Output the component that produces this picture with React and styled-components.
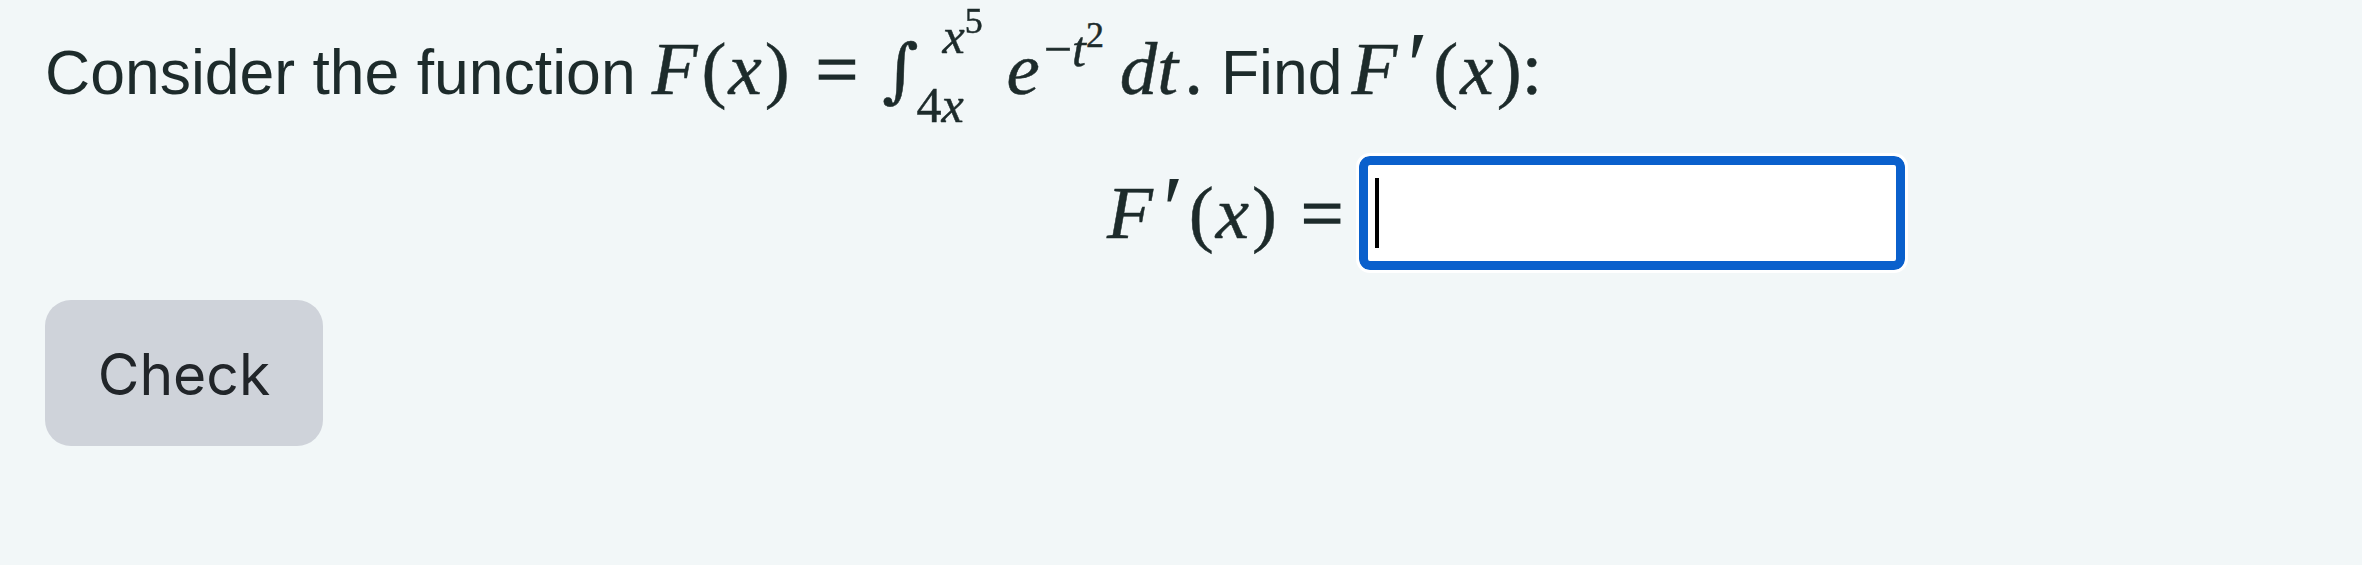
import React from "react";
import styled, { createGlobalStyle } from "styled-components";

const Global = createGlobalStyle`
  html, body { margin: 0; padding: 0; background: #f2f7f8; }
  #root { width: 2362px; height: 565px; overflow: hidden; }
`;

const Page = styled.main`
  box-sizing: border-box;
  width: 2362px;
  height: 565px;
  padding: 0 45px;
  background: #f2f7f8;
  color: #1d2b2b;
  font-family: "Liberation Sans", Arial, sans-serif;
  font-size: 62.5px;
  filter: blur(0.6px);
`;

const Prompt = styled.p`
  margin: 0;
  height: 150px;
  display: flex;
  align-items: baseline;
  white-space: nowrap;
  padding-top: 34px;
  box-sizing: border-box;
  line-height: 70px;
`;

const Formula = styled.span`
  display: inline-flex;
  align-items: baseline;
  font-family: "Liberation Serif", "Times New Roman", serif;
  font-size: 75px;
  -webkit-text-stroke: 0.5px currentColor;
  margin-left: ${(p) => p.$ml || 0}px;
`;

const Var = styled.i`
  font-style: italic;
  margin-left: ${(p) => p.$ml || 0}px;
`;

const Sym = styled.span`
  margin-left: ${(p) => p.$ml || 0}px;
`;

const Equals = styled.span`
  margin-left: ${(p) => p.$ml || 0}px;
  -webkit-text-stroke: 1.6px currentColor;
`;

const Word = styled.span`
  margin-left: ${(p) => p.$ml || 0}px;
`;

const Raised = styled.span`
  display: inline-block;
  font-size: ${(p) => p.$size}px;
  transform: translate(${(p) => p.$x || 0}px, ${(p) => p.$y || 0}px);
  width: ${(p) => (p.$w ? `${p.$w}px` : "auto")};
  white-space: nowrap;
`;

const Prime = styled.i`
  display: inline-block;
  font-size: 96px;
  width: 34px;
  line-height: 0;
  transform: translate(4px, 4px);
  -webkit-text-stroke: 0;
`;

const Integral = styled.span`
  font-family: "DejaVu Serif", serif;
  font-size: 70px;
  display: inline-block;
  margin-left: ${(p) => p.$ml || 0}px;
`;

const Answer = styled.div`
  display: flex;
  align-items: center;
  height: 114px;
  margin-top: 6px;
  padding-left: 1062px;
`;

const Lhs = styled(Formula)`
  width: 252px;
`;

const Field = styled.label`
  position: relative;
  display: block;
  width: 546px;
  height: 114px;
`;

const Input = styled.input`
  box-sizing: border-box;
  width: 100%;
  height: 100%;
  padding: 0;
  border: 9px solid #0a60cc;
  border-radius: 11px;
  outline: 3px solid #fff;
  background: #fff;
  caret-color: transparent;
`;

const Caret = styled.span`
  position: absolute;
  left: 16px;
  top: 22px;
  width: 4px;
  height: 70px;
  background: #000;
`;

const Check = styled.button`
  display: block;
  margin-top: 30px;
  width: 278px;
  height: 146px;
  padding: 2px 0 0;
  border: 0;
  border-radius: 26px;
  background: #cfd3da;
  color: #212529;
  font-family: Inter, "Liberation Sans", sans-serif;
  font-size: 57px;
`;

const FPrime = () => (
  <>
    <Var>F</Var>
    <Prime>′</Prime>
    <Sym $ml={2}>(</Sym>
    <Var $ml={2}>x</Var>
    <Sym $ml={3}>)</Sym>
  </>
);

export default function App() {
  return (
    <Page>
      <Global />
      <Prompt>
        Consider the function
        <Formula $ml={16}>
          <Var>F</Var>
          <Sym $ml={4}>(</Sym>
          <Var $ml={2}>x</Var>
          <Sym $ml={3}>)</Sym>
          <Equals $ml={26}>=</Equals>
          <Integral $ml={24}>∫</Integral>
          <Raised $size={50} $w={70} $x={24} $y={-41}>
            <Var>x</Var>
            <Raised $size={36} $y={-20}>5</Raised>
          </Raised>
          <Raised $size={50} $w={18} $x={-72} $y={28}>
            4<Var>x</Var>
          </Raised>
          <Var>e</Var>
          <Raised $size={50} $w={72} $x={4} $y={-28}>
            −<Var>t</Var>
            <Raised $size={36} $y={-19}>2</Raised>
          </Raised>
          <Var $ml={8}>dt</Var>
          <Sym $ml={6}>.</Sym>
        </Formula>
        <Word $ml={18}>Find</Word>
        <Formula $ml={9}>
          <FPrime />
          <Sym>:</Sym>
        </Formula>
      </Prompt>
      <Answer>
        <Lhs>
          <FPrime />
          <Equals $ml={24}>=</Equals>
        </Lhs>
        <Field>
          <Input aria-label="F'(x)" />
          <Caret />
        </Field>
      </Answer>
      <Check>Check</Check>
    </Page>
  );
}
